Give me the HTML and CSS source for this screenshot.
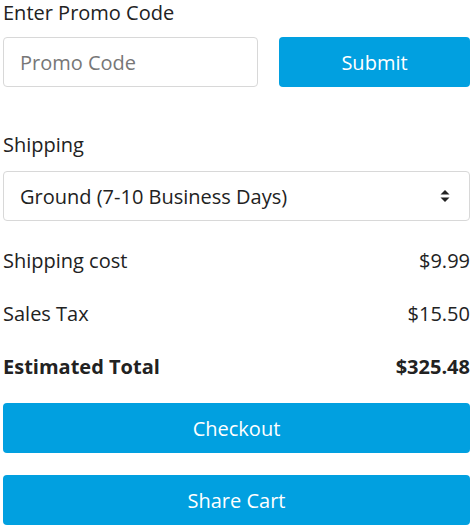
FILE: index.html
```html
<!DOCTYPE html>
<html>
    <head>
        <meta charset="UTF-8">
        <meta name="viewport" content="width=device-width, initial-scale=1.0">
        <title>Cart Summary</title>
        <link rel="stylesheet" href="styles.css">
    </head>
    <body>
        <div class="cart">
            <label class="field-label" for="promo">Enter Promo Code</label>
            <div class="promo-row">
                <input id="promo" class="text-input" type="text" placeholder="Promo Code">
                <button class="btn submit-btn">Submit</button>
            </div>

            <label class="field-label shipping-label" for="shipping">Shipping</label>
            <div class="select-box">
                <span class="select-value">Ground (7-10 Business Days)</span>
                <svg class="select-arrow" width="10" height="14" viewBox="0 0 10 14">
                    <path d="M5 1 L9.5 5.5 L0.5 5.5 Z" fill="#222"/>
                    <path d="M5 13 L9.5 8.5 L0.5 8.5 Z" fill="#222"/>
                </svg>
            </div>

            <div class="summary">
                <div class="summary-row">
                    <span>Shipping cost</span>
                    <span>$9.99</span>
                </div>
                <div class="summary-row">
                    <span>Sales Tax</span>
                    <span>$15.50</span>
                </div>
                <div class="summary-row total">
                    <span>Estimated Total</span>
                    <span>$325.48</span>
                </div>
            </div>

            <button class="btn wide-btn">Checkout</button>
            <button class="btn wide-btn">Share Cart</button>
        </div>
    </body>
</html>
```

FILE: styles.css
```css
body {
    margin: 0;
    background-color: #ffffff;
    font-family: "Open Sans", "Noto Sans", Arial, sans-serif;
    color: #222222;
}

.cart {
    display: flex;
    flex-direction: column;
    padding: 1px 4px 0 3px;
}

.field-label {
    font-size: 20px;
    line-height: 24px;
    display: block;
}

.shipping-label {
    margin-top: 46px;
}

.promo-row {
    display: flex;
    gap: 21px;
    margin-top: 12px;
}

.text-input {
    width: 255px;
    height: 50px;
    box-sizing: border-box;
    border: 1px solid #d8d8d8;
    border-radius: 4px;
    padding: 0 16px;
    font-family: inherit;
    font-size: 20px;
    color: #222222;
    outline: none;
}

.text-input::placeholder {
    color: #777777;
}

.btn {
    background-color: #01a0e0;
    border: none;
    border-radius: 4px;
    color: #ffffff;
    font-family: inherit;
    font-size: 20px;
    height: 50px;
    cursor: pointer;
}

.submit-btn {
    flex: 1;
}

.select-box {
    display: flex;
    align-items: center;
    justify-content: space-between;
    height: 50px;
    box-sizing: border-box;
    margin-top: 14px;
    border: 1px solid #d8d8d8;
    border-radius: 4px;
    padding: 0 16px 0 16px;
    font-size: 20px;
}

.select-arrow {
    display: block;
    margin-right: 3px;
}

.summary {
    display: flex;
    flex-direction: column;
    margin-top: 13px;
    margin-bottom: 10px;
}

.summary-row {
    display: flex;
    justify-content: space-between;
    font-size: 20px;
    height: 53px;
    align-items: center;
}

.total {
    font-weight: bold;
}

.wide-btn {
    width: 100%;
    margin-bottom: 22px;
}
```
